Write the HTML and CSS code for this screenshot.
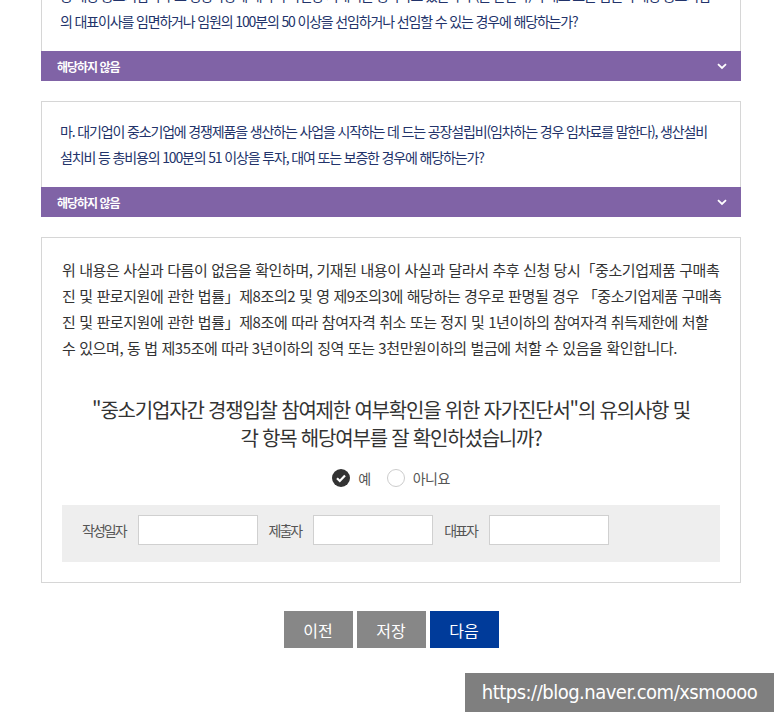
FILE: index.html
```html
<!DOCTYPE html>
<html lang="ko">
<head>
    <meta charset="UTF-8">
    <title>자가진단서</title>
    <link rel="stylesheet" href="styles.css">
</head>
<body>
    <div class="container">
        <div class="question-box">
            <p class="question">등 해당 중소기업의 주요 경영사항에 대하여 사실상 지배력을 행사하고 있는 주주(을 말한다)의 대표 또는 임원이 해당 중소기업<br>의 대표이사를 임면하거나 임원의 100분의 50 이상을 선임하거나 선임할 수 있는 경우에 해당하는가?</p>
            <div class="answer-bar">
                <span>해당하지 않음</span>
                <svg class="chevron" width="10" height="7" viewBox="0 0 10 7"><path d="M1 1.2 L5 5 L9 1.2" fill="none" stroke="#fff" stroke-width="1.8"/></svg>
            </div>
        </div>

        <div class="question-box">
            <p class="question">마. 대기업이 중소기업에 경쟁제품을 생산하는 사업을 시작하는 데 드는 공장설립비(임차하는 경우 임차료를 말한다), 생산설비<br>설치비 등 총비용의 100분의 51 이상을 투자, 대여 또는 보증한 경우에 해당하는가?</p>
            <div class="answer-bar">
                <span>해당하지 않음</span>
                <svg class="chevron" width="10" height="7" viewBox="0 0 10 7"><path d="M1 1.2 L5 5 L9 1.2" fill="none" stroke="#fff" stroke-width="1.8"/></svg>
            </div>
        </div>

        <div class="confirm-box">
            <p class="notice">위 내용은 사실과 다름이 없음을 확인하며, 기재된 내용이 사실과 달라서 추후 신청 당시「중소기업제품 구매촉<br>진 및 판로지원에 관한 법률」제8조의2 및 영 제9조의3에 해당하는 경우로 판명될 경우 「중소기업제품 구매촉<br>진 및 판로지원에 관한 법률」제8조에 따라 참여자격 취소 또는 정지 및 1년이하의 참여자격 취득제한에 처할<br>수 있으며, 동 법 제35조에 따라 3년이하의 징역 또는 3천만원이하의 벌금에 처할 수 있음을 확인합니다.</p>

            <h3 class="confirm-title">"중소기업자간 경쟁입찰 참여제한 여부확인을 위한 자가진단서"의 유의사항 및<br>각 항목 해당여부를 잘 확인하셨습니까?</h3>

            <div class="radio-row">
                <label class="radio">
                    <svg width="18" height="18" viewBox="0 0 18 18"><circle cx="9" cy="9" r="9" fill="#333"/><path d="M5 9.2 L7.8 12 L13 6.4" fill="none" stroke="#fff" stroke-width="2.2"/></svg>
                    예
                </label>
                <label class="radio">
                    <svg width="18" height="18" viewBox="0 0 18 18"><circle cx="9" cy="9" r="8.5" fill="#fff" stroke="#ccc"/></svg>
                    아니요
                </label>
            </div>

            <div class="sign-row">
                <label>작성일자</label>
                <input type="text">
                <label>제출자</label>
                <input type="text">
                <label>대표자</label>
                <input type="text">
            </div>
        </div>

        <div class="buttons">
            <button class="btn-gray">이전</button>
            <button class="btn-gray">저장</button>
            <button class="btn-blue">다음</button>
        </div>
    </div>

    <div class="watermark">https://blog.naver.com/xsmoooo</div>
</body>
</html>
```

FILE: styles.css
```css
html, body {
    margin: 0;
    padding: 0;
    overflow: hidden;
}
body {
    font-family: "Noto Sans CJK KR", "Liberation Sans", sans-serif;
    background: #fff;
    color: #333;
}
.container {
    width: 700px;
    margin: -35px auto 0;
}
.question-box {
    border: 1px solid #d6d6d6;
    border-bottom: none;
    margin-bottom: 20px;
}
.question {
    margin: 0;
    padding: 16px 18px 17px;
    font-size: 14px;
    line-height: 26px;
    letter-spacing: -1.15px;
    color: #22336a;
    white-space: nowrap;
}
.answer-bar {
    display: flex;
    align-items: center;
    justify-content: space-between;
    height: 30px;
    margin: 0 -1px;
    padding: 0 14px 0 16px;
    background-color: #8063a6;
    color: #fff;
    font-size: 12px;
    font-weight: bold;
    letter-spacing: -1px;
}
.confirm-box {
    border: 1px solid #d6d6d6;
    padding: 19px 20px 20px;
}
.notice {
    margin: 0;
    font-size: 15px;
    line-height: 26px;
    letter-spacing: -0.4px;
    white-space: nowrap;
}
.confirm-title {
    margin: 35px 0 0;
    text-align: center;
    font-size: 20px;
    font-weight: normal;
    line-height: 28px;
    letter-spacing: -1.2px;
}
.radio-row {
    display: flex;
    justify-content: center;
    gap: 16px;
    margin-top: 16px;
    font-size: 14px;
    color: #555;
    letter-spacing: -0.5px;
}
.radio {
    display: flex;
    align-items: center;
    gap: 8px;
}
.sign-row {
    display: flex;
    align-items: center;
    margin-top: 17px;
    padding: 10px 20px 17px;
    background-color: #eee;
    font-size: 14px;
    color: #555;
    letter-spacing: -2px;
}
.sign-row input {
    width: 120px;
    height: 30px;
    box-sizing: border-box;
    margin: 0 11px 0 12px;
    border: 1px solid #d0d0d0;
    background: #fff;
}
.buttons {
    display: flex;
    justify-content: center;
    gap: 4px;
    margin-top: 28px;
}
.buttons button {
    width: 69px;
    height: 37px;
    border: none;
    color: #fff;
    font-family: inherit;
    font-size: 16px;
}
.btn-gray {
    background-color: #878787;
}
.btn-blue {
    background-color: #003b9a;
}
.watermark {
    position: absolute;
    top: 673px;
    right: 8px;
    width: 309px;
    height: 39px;
    background-color: #7f7f7f;
    color: #fff;
    font-family: "DejaVu Sans Condensed", sans-serif;
    font-size: 20px;
    line-height: 39px;
    text-align: center;
    letter-spacing: -0.5px;
}
```
